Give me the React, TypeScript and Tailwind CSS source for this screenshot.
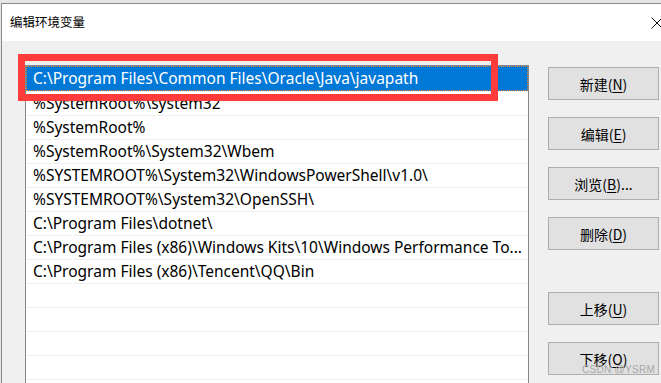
import React from "react";

const paths = [
  "C:\\Program Files\\Common Files\\Oracle\\Java\\javapath",
  "%SystemRoot%\\system32",
  "%SystemRoot%",
  "%SystemRoot%\\System32\\Wbem",
  "%SYSTEMROOT%\\System32\\WindowsPowerShell\\v1.0\\",
  "%SYSTEMROOT%\\System32\\OpenSSH\\",
  "C:\\Program Files\\dotnet\\",
  "C:\\Program Files (x86)\\Windows Kits\\10\\Windows Performance To...",
  "C:\\Program Files (x86)\\Tencent\\QQ\\Bin",
  "",
  "",
  "",
  "",
  "",
];

const buttons = [
  { label: "新建", key: "N", tail: "" },
  { label: "编辑", key: "E", tail: "" },
  { label: "浏览", key: "B", tail: "..." },
  { label: "删除", key: "D", tail: "" },
];

const moveButtons = [
  { label: "上移", key: "U", tail: "" },
  { label: "下移", key: "O", tail: "" },
];

const font = { fontFamily: '"Noto Sans", "Noto Sans CJK SC", sans-serif' };

function WinButton({ label, keyChar, tail }: { label: string; keyChar: string; tail: string }) {
  return (
    <button className="w-[111px] h-[33px] bg-[#e1e1e1] border border-[#adadad] text-[14px] text-black flex items-center justify-center leading-none">
      {label}(<span className="underline underline-offset-2">{keyChar}</span>){tail}
    </button>
  );
}

export default function App() {
  return (
    <div
      className="w-[661px] h-[383px] overflow-hidden bg-[#e6e6e6] pt-[3px] pl-[1px] relative"
      style={font}
    >
      <div className="h-full border-l border-t border-[#8a8a8a] bg-[#f0f0f0] flex flex-col">
        {/* Title bar */}
        <div className="h-[37px] bg-white flex items-center justify-between pl-[8px] shrink-0">
          <span className="text-[12.5px] text-black" style={{ fontFamily: '"Noto Sans CJK SC", sans-serif' }}>
            编辑环境变量
          </span>
          <svg width="12" height="12" viewBox="0 0 12 12" className="mr-[-2px]">
            <path d="M0.5 0.5 L11.5 11.5 M11.5 0.5 L0.5 11.5" stroke="#111" strokeWidth="1" />
          </svg>
        </div>

        {/* Body */}
        <div className="flex pt-[24px] pl-[23px] gap-[19px]">
          {/* List */}
          <div className="w-[504px] h-[330px] bg-white border border-[#828790] border-b-0 text-[15.5px] text-black overflow-hidden">
            {paths.map((p, i) =>
              i === 0 ? (
                <div
                  key={i}
                  className="h-[25px] border border-dotted border-[#e08a2a] bg-[#0078d7] text-white pl-[6px] flex items-center whitespace-nowrap"
                >
                  {p}
                </div>
              ) : (
                <div
                  key={i}
                  className="h-[24px] border-t border-[#f0f0f0] pl-[7px] flex items-center whitespace-nowrap"
                >
                  {p}
                </div>
              )
            )}
          </div>

          {/* Buttons */}
          <div className="flex flex-col pt-[2px]" style={{ fontFamily: '"Noto Sans CJK SC", sans-serif' }}>
            <div className="flex flex-col gap-[17px]">
              {buttons.map((b) => (
                <WinButton key={b.key} label={b.label} keyChar={b.key} tail={b.tail} />
              ))}
            </div>
            <div className="flex flex-col gap-[17px] mt-[42px]">
              {moveButtons.map((b) => (
                <WinButton key={b.key} label={b.label} keyChar={b.key} tail={b.tail} />
              ))}
            </div>
          </div>
        </div>
      </div>

      {/* Red highlight */}
      <div className="absolute left-[18px] top-[54px] w-[480px] h-[47px] border-[7px] border-[#fe3c3c]" />

      {/* Watermark */}
      <div
        className="absolute left-[582px] top-[365px] text-[10px] leading-none text-[#a8a8a8] tracking-[0.3px]"
        style={{ fontFamily: '"Liberation Sans", sans-serif' }}
      >
        CSDN @YSRM
      </div>
    </div>
  );
}
